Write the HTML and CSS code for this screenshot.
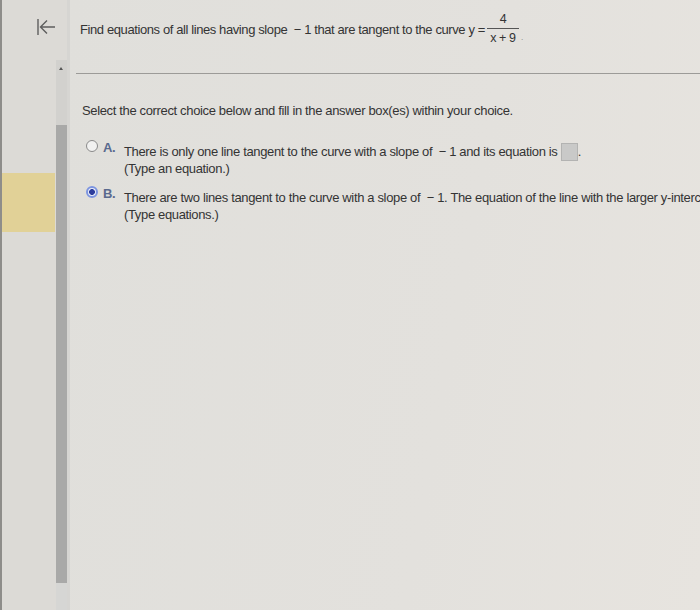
FILE: index.html
```html
<!DOCTYPE html>
<html>
<head>
<meta charset="utf-8">
<link rel="stylesheet" href="styles.css">
</head>
<body>
<div class="page">
  <aside class="side">
    <div class="back">
      <svg width="20" height="20" viewBox="0 0 20 20">
        <path d="M2 2 V18 M19 10 H5 M11 3.5 L4.5 10 L11 16.5" fill="none" stroke="#5e5e5e" stroke-width="1.4"/>
      </svg>
    </div>
    <div class="highlight"></div>
  </aside>
  <div class="scroll">
    <div class="track-top"><span class="up"></span></div>
    <div class="thumb"></div>
    <div class="track-bottom"></div>
  </div>
  <main class="main">
    <div class="question">
      <span>Find equations of all lines having slope &nbsp;− 1 that are tangent to the curve y =</span>
      <span class="frac"><span class="num">4</span><span class="den">x + 9</span></span><span class="dot">.</span>
    </div>
    <div class="rule"></div>
    <p class="instr">Select the correct choice below and fill in the answer box(es) within your choice.</p>
    <div class="opt opt-a">
      <span class="radio"></span>
      <span class="letter">A.</span>
      <div class="body">
        <div class="line">There is only one line tangent to the curve with a slope of &nbsp;− 1 and its equation is <span class="box"></span>.</div>
        <div class="line">(Type an equation.)</div>
      </div>
    </div>
    <div class="opt opt-b">
      <span class="radio checked"></span>
      <span class="letter">B.</span>
      <div class="body">
        <div class="line">There are two lines tangent to the curve with a slope of &nbsp;− 1. The equation of the line with the larger y-intercept is <span class="box"></span> and the equation of the line with the smaller y-intercept is <span class="box"></span>.</div>
        <div class="line">(Type equations.)</div>
      </div>
    </div>
  </main>
</div>
</body>
</html>
```

FILE: styles.css
```css
html, body {
  margin: 0;
  padding: 0;
  width: 700px;
  height: 610px;
  overflow: hidden;
}
body {
  font-family: "Liberation Sans", Arial, sans-serif;
  color: #343434;
  background: #e2e0dc;
}
.page {
  display: flex;
  width: 700px;
  height: 610px;
}
.side {
  width: 56px;
  flex: none;
  background: #dcdad6;
  border-left: 2px solid #8e8d8a;
  box-sizing: border-box;
  display: flex;
  flex-direction: column;
}
.back {
  height: 40px;
  padding: 17px 0 0 34px;
  box-sizing: border-box;
}
.back svg { display: block; }
.highlight {
  margin-top: 133px;
  height: 59px;
  margin-right: 1px;
  background: #e1d197;
}
.scroll {
  width: 11px;
  flex: none;
  display: flex;
  flex-direction: column;
  background: #dcdad6;
  padding-top: 60px;
  border-right: 3px solid #d6d5d2;
}
.track-top {
  height: 65px;
  background: #d2d1ce;
  position: relative;
}
.up {
  position: absolute;
  left: 3px;
  top: 7px;
  width: 0;
  height: 0;
  border-left: 2.5px solid transparent;
  border-right: 2.5px solid transparent;
  border-bottom: 3px solid #555;
}
.thumb {
  height: 458px;
  background: #a9a9a8;
}
.track-bottom {
  flex: 1;
  background: #d6d6d4;
}
.main {
  flex: 1;
  min-width: 0;
  overflow: hidden;
  background: linear-gradient(100deg, #e0dfdb 0%, #e3e1dd 60%, #e7e4df 100%);
}
.question {
  display: flex;
  align-items: center;
  padding: 9px 0 0 10px;
  height: 40px;
  font-size: 13px;
  letter-spacing: -0.4px;
  white-space: nowrap;
}
.frac {
  display: inline-flex;
  flex-direction: column;
  align-items: center;
  margin-left: 2px;
  font-size: 12.5px;
}
.num {
  padding: 0 4px 2px;
  border-bottom: 1px solid #555;
  width: 24px;
  text-align: center;
  margin-top: -2px;
}
.den {
  padding-top: 2px;
}
.dot {
  align-self: center;
  margin-top: 16px;
  margin-left: 2px;
  font-size: 8px;
  color: #777;
}
.rule {
  margin: 24px 0 0 6px;
  height: 1px;
  background: #9c9b98;
}
.instr {
  margin: 29px 0 0 12px;
  font-size: 13px;
  letter-spacing: -0.35px;
  white-space: nowrap;
}
.opt {
  display: flex;
  align-items: flex-start;
  white-space: nowrap;
  font-size: 13px;
  letter-spacing: -0.35px;
}
.opt-a { margin: 22px 0 0 16px; }
.opt-b { margin: 10px 0 0 16px; }
.radio {
  width: 12px;
  height: 12px;
  border-radius: 50%;
  border: 1px solid #8a8a8a;
  background: #f1f1f0;
  flex: none;
  margin-top: 0;
  box-sizing: border-box;
}
.radio.checked {
  border: 2px solid #7d95e0;
  background: radial-gradient(circle, #2d3d9c 0 2.6px, #e8ecf8 3.2px);
}
.letter {
  margin-left: 5px;
  width: 21px;
  flex: none;
  font-weight: bold;
  color: #5a6a8e;
}
.body {
  margin-top: 3px;
  line-height: 15px;
}
.box {
  display: inline-block;
  width: 17px;
  height: 18px;
  background: #c9c9c8;
  border: 1px solid #b3b3b2;
  vertical-align: -5px;
  box-sizing: border-box;
}
```
